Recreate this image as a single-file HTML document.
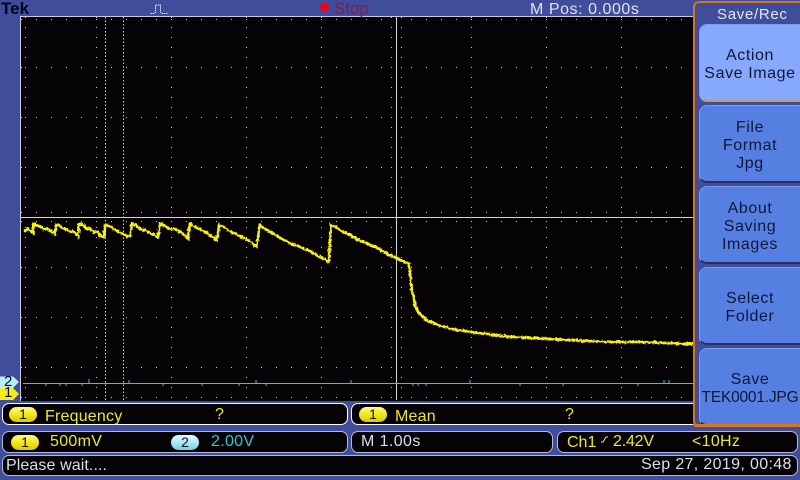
<!DOCTYPE html>
<html><head><meta charset="utf-8"><style>
html,body{margin:0;padding:0;background:#3f4d9a}
#r{position:relative;width:800px;height:480px;overflow:hidden;background:#3f4d9a;font-family:"Liberation Sans",sans-serif;font-size:16px}
.t{position:absolute;white-space:pre;line-height:18px}
.y{color:#e8e830}.c{color:#2cc8d0}.w{color:#dde}
.box{position:absolute;background:#050305;box-sizing:border-box;border:1.5px solid #b4b8d8;border-radius:7px}
.m{border-color:#fff}
.pill{position:absolute;width:28px;height:15px;border-radius:8px;background:linear-gradient(#fbf6a0,#f6ee20 40%,#dcc800);color:#111;font-size:14px;line-height:15px;text-align:center}
.pc{background:linear-gradient(#e8fbff,#a8e8f4 50%,#78cce4)}
.btn{position:absolute;left:699px;width:104px;height:78px;box-sizing:border-box;background:#5580e2;border-radius:8px 0 0 8px;border-bottom:2px solid #26305e;border-top:1px solid #7c9cf0;border-left:1px solid #7c9cf0;color:#10163a;text-align:center;line-height:18px;font-size:16px;letter-spacing:.6px;padding-right:3px}
</style></head><body><div id="r">
<svg style="position:absolute;left:0;top:0" width="800" height="480">
<defs><filter id="n" filterUnits="userSpaceOnUse" x="0" y="200" width="700" height="170"><feTurbulence type="fractalNoise" baseFrequency="0.45" numOctaves="2" seed="4"/><feDisplacementMap in="SourceGraphic" scale="4" xChannelSelector="R" yChannelSelector="G"/></filter></defs>
<rect x="21" y="16" width="673" height="385" fill="#050305"/>
<path d="M20.500 16V401M20 16.500H694" stroke="#c8cae0" fill="none"/>
<g stroke="#c8c8c8" fill="none" stroke-width="1" stroke-dasharray="1 14">
<path d="M21 19.500H694M21 67.500H694M21 117.500H694M21 167.500H694M21 267.500H694M21 317.500H694M21 367.500H694"/>
<path d="M21 212.500H694M21 221.500H694M21 397.500H694"/>
</g>
<g stroke="#c8c8c8" fill="none" stroke-width="1" stroke-dasharray="1 9">
<path d="M96.500 17V400M171.500 17V400M246.500 17V400M321.500 17V400M471.500 17V400M546.500 17V400M621.500 17V400"/>
<path d="M25.500 17V400M391.500 17V400M401.500 17V400"/>
</g>
<path d="M21 217.500H694M396.500 17V400" stroke="#d4d4d4" fill="none"/>
<g stroke="#e0e060" fill="none" stroke-dasharray="1.500 2"><path d="M105.500 17V400M123.500 17V400"/></g>
<path d="M23 383.500H694" stroke="#2cccd0" fill="none"/>
<path d="M46 383v3M60 383v3M66 383v3M82 383v3M89 383v-4M129 383v-3M163 383v3M202 383v3M239 383v3M256 383v-3M266 383v3M351 383v-3M413 383v3M418 383v3M426 383v3M470 383v-3M520 383v3M563 383v3M638 383v3M664 383v-3M669 383v-3" stroke="#2cccd0" fill="none"/>
<g filter="url(#n)">
<path d="M24 231L28 229L33 233L33.500 224L38 226L40 226L44 229L48 229L52 232L55 234L56 225L59 225L62 228L66 229L70 232L73 231L78 236L79 224L83 225L87 229L90 229L94 232L98 232L100 236L104 237L105 225L110 226L114 229L118 232L122 233L126 236L130 236L132 224L136 225L140 229L145 230L150 233L156 236L158 237L160 224L165 226L170 229L175 229L180 232L186 236L188 238L190 224L195 227L200 229L205 232L211 236L217 240L219 225L224 227L229 231L234 233L240 236L246 239L252 243L257 247L258 236L260 225L264 228L268 231L274 234L280 238L286 241L292 244L298 246L304 249L310 251L316 255L322 258L329 262L330 240L331 225L336 227L341 231L346 233L352 236L358 240L364 242L370 245L376 247L382 251L388 254L394 257L400 260L405 262L409 264L410 275L411 285L413 295L415 305L418 312L423 317L428 321L434 323L440 326L446 327L452 329L458 330L466 331L476 333L488 334L500 336L515 337L530 338L550 339L570 340L590 341L610 342L640 342L665 343L693 344" fill="none" stroke="#f6f018" stroke-width="2.700" stroke-linejoin="miter"/>
</g>
<path d="M150.500 13.500h3l2-1v-7.500h5v7.500l2 1h5" fill="none" stroke="#e8e8f4" stroke-dasharray="1.500 .7"/>
<circle cx="324.500" cy="7" r="4.500" fill="#f0001c"/>
<path d="M0 376.500H13L19 382L13 388H0Z" fill="#b8ecf6"/>
<path d="M0 388H13L19 394L13 400H0Z" fill="#f4ec20"/>
</svg>
<div class="t" style="left:1px;top:0;font-weight:bold;font-size:17px;color:#04051c">Tek</div>
<div class="t" style="left:334px;top:0;font-size:17px;color:#8a1a48">Stop</div>
<div class="t w" style="left:530px;top:1px;font-size:16px;letter-spacing:.55px;color:#e0e2f0">M Pos: 0.000s</div>
<div class="t" style="left:4px;top:375px;font-size:15px;line-height:14px;color:#111">2</div>
<div class="t" style="left:4px;top:386px;font-size:15px;line-height:14px;color:#111">1</div>

<div class="box m" style="left:2px;top:403px;width:346px;height:22px"></div>
<div class="box m" style="left:351px;top:403px;width:350px;height:22px"></div>
<div class="pill" style="left:9px;top:407px">1</div>
<div class="t y" style="left:45px;top:408px;letter-spacing:.2px">Frequency</div>
<div class="t y" style="left:215px;top:406px">?</div>
<div class="pill" style="left:359px;top:407px">1</div>
<div class="t y" style="left:395px;top:408px;letter-spacing:.2px">Mean</div>
<div class="t y" style="left:565px;top:406px">?</div>

<div class="box" style="left:2px;top:431px;width:346px;height:22px"></div>
<div class="box" style="left:351px;top:431px;width:202px;height:22px"></div>
<div class="box" style="left:557px;top:431px;width:241px;height:22px"></div>
<div class="pill" style="left:11px;top:435px">1</div>
<div class="t y" style="left:50px;top:433px;letter-spacing:.3px">500mV</div>
<div class="pill pc" style="left:171px;top:435px">2</div>
<div class="t c" style="left:211px;top:433px;letter-spacing:.3px">2.00V</div>
<div class="t" style="left:361px;top:433px;color:#dde;letter-spacing:.4px">M 1.00s</div>
<div class="t y" style="left:567px;top:434px">Ch1</div>
<svg style="position:absolute;left:600px;top:434px" width="12" height="14"><path d="M1 8h2l3-5h2" fill="none" stroke="#e8e8a0"/></svg>
<div class="t y" style="left:613px;top:433px;letter-spacing:-.2px">2.42V</div>
<div class="t y" style="left:692px;top:433px;letter-spacing:.3px">&lt;10Hz</div>

<div class="box" style="left:2px;top:455px;width:796px;height:21px"></div>
<div class="t w" style="left:6px;top:457px;letter-spacing:.1px;color:#dde">Please wait....</div>
<div class="t w" style="left:641px;top:456px;letter-spacing:.35px;color:#dde">Sep 27, 2019, 00:48</div>

<div style="position:absolute;left:693px;top:1px;width:120px;height:426px;box-sizing:border-box;background:#3f4d9a;border:2px solid #d8741c;border-radius:6px"></div>
<div class="t" style="left:717px;top:6px;color:#e4e6f4;font-size:15px;letter-spacing:.7px">Save/Rec</div>
<div class="btn" style="top:24px;background:#86a9fc;border-bottom:2px solid #c49a70;padding-top:22px">Action<br>Save Image</div>
<div class="btn" style="top:105px;padding-top:13px">File<br>Format<br>Jpg</div>
<div class="btn" style="top:186px;padding-top:13px">About<br>Saving<br>Images</div>
<div class="btn" style="top:267px;padding-top:22px">Select<br>Folder</div>
<div class="btn" style="top:348px;padding-top:22px">Save<br><span style="letter-spacing:-.2px;font-size:15.500px">TEK0001.JPG</span></div>
<div style="position:absolute;left:693px;top:424px;width:107px;height:3px;background:#d8741c;border-radius:0 0 0 5px"></div>
</div></body></html>
